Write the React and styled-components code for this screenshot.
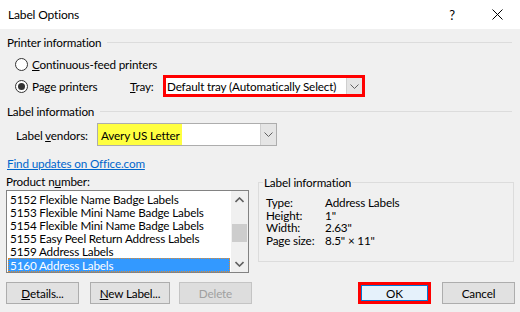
import React from "react";
import styled, { createGlobalStyle } from "styled-components";

const GlobalStyle = createGlobalStyle`
  html, body {
    margin: 0;
    padding: 0;
    background: #f0f0f0;
  }
  body {
    font-family: Lato, "Liberation Sans", Arial, sans-serif;
    font-size: 11.7px;
    letter-spacing: -0.15px;
    color: #000;
  }
`;

const products = [
  "5152 Flexible Name Badge Labels",
  "5153 Flexible Mini Name Badge Labels",
  "5154 Flexible Mini Name Badge Labels",
  "5155 Easy Peel Return Address Labels",
  "5159 Address Labels",
  "5160 Address Labels",
];

const details = [
  ["Type:", "Address Labels"],
  ["Height:", "1\""],
  ["Width:", "2.63\""],
  ["Page size:", "8.5\" \u00d7 11\""],
];

const Chevron = ({ up }) => (
  <svg width="9" height="6" viewBox="0 0 9 6">
    <path
      d={up ? "M0.5 5 L4.5 1 L8.5 5" : "M0.5 1 L4.5 5 L8.5 1"}
      fill="none"
      stroke="#606060"
      strokeWidth="1.6"
    />
  </svg>
);

const SmallChevron = () => (
  <svg width="9" height="5" viewBox="0 0 9 5">
    <path d="M0.5 0.5 L4.5 4.5 L8.5 0.5" fill="none" stroke="#606060" strokeWidth="1" />
  </svg>
);

const CloseIcon = () => (
  <svg width="11" height="11" viewBox="0 0 11 11">
    <path d="M0.5 0.5 L10.5 10.5 M10.5 0.5 L0.5 10.5" stroke="#000" strokeWidth="1" />
  </svg>
);

const App = () => {
  return (
    <>
      <GlobalStyle />
      <Dialog>
        <TitleBar>
          <Title>Label Options</Title>
          <TitleButtons>
            <Help>?</Help>
            <CloseBox>
              <CloseIcon />
            </CloseBox>
          </TitleButtons>
        </TitleBar>

        <Body>
          <SectionHeader top={5}>
            <span>Printer information</span>
            <Rule />
          </SectionHeader>

          <RadioRow top={3}>
            <Radio />
            <span>
              <u>C</u>ontinuous-feed printers
            </span>
          </RadioRow>
          <RadioRow>
            <Radio checked />
            <RadioText>
              Pa<u>g</u>e printers
            </RadioText>
            <TrayLabel>
              <u>T</u>ray:
            </TrayLabel>
            <RedMark>
              <Combo width={196}>
                <ComboText>Default tray (Automatically Select)</ComboText>
                <ComboArrow>
                  <SmallChevron />
                </ComboArrow>
              </Combo>
            </RedMark>
          </RadioRow>

          <SectionHeader top={6}>
            <span>Label information</span>
            <Rule />
          </SectionHeader>

          <VendorRow>
            <VendorLabel>
              Label <u>v</u>endors:
            </VendorLabel>
            <Combo width={180} bordered>
              <ComboText highlight>Avery US Letter</ComboText>
              <ComboArrow>
                <SmallChevron />
              </ComboArrow>
            </Combo>
          </VendorRow>

          <Link>Find updates on Office.com</Link>

          <Columns>
            <LeftColumn>
              <FieldLabel>
                Product n<u>u</u>mber:
              </FieldLabel>
              <ListBox>
                <ListItems>
                  {products.map((p, i) => (
                    <ListItem key={p} selected={i === products.length - 1}>
                      {p}
                    </ListItem>
                  ))}
                </ListItems>
                <ScrollBar>
                  <ScrollArrow>
                    <Chevron up />
                  </ScrollArrow>
                  <ScrollTrack>
                    <Thumb />
                  </ScrollTrack>
                  <ScrollArrow>
                    <Chevron />
                  </ScrollArrow>
                </ScrollBar>
              </ListBox>
            </LeftColumn>

            <GroupBox>
              <Legend>Label information</Legend>
              <InfoList>
                {details.map(([k, v]) => (
                  <InfoRow key={k}>
                    <InfoKey>{k}</InfoKey>
                    <span>{v}</span>
                  </InfoRow>
                ))}
              </InfoList>
            </GroupBox>
          </Columns>

          <ButtonBar>
            <ButtonGroup>
              <Button width={73}>
                <u>D</u>etails...
              </Button>
              <Button width={80} gap={11}>
                <u>N</u>ew Label...
              </Button>
              <Button width={73} gap={9} disabled>
                Delete
              </Button>
            </ButtonGroup>
            <ButtonGroup>
              <RedMark>
                <Button width={67} primary>
                  OK
                </Button>
              </RedMark>
              <Button width={73} gap={11}>
                Cancel
              </Button>
            </ButtonGroup>
          </ButtonBar>
        </Body>
      </Dialog>
    </>
  );
};

const Dialog = styled.div`
  width: 520px;
  height: 312px;
  display: flex;
  flex-direction: column;
  background: #f0f0f0;
  overflow: hidden;
`;

const TitleBar = styled.div`
  height: 29px;
  flex: none;
  background: #fff;
  display: flex;
  align-items: center;
  justify-content: space-between;
  padding: 0 0 0 8px;
`;

const Title = styled.div`
  font-size: 12px;
  margin-top: -1px;
`;

const TitleButtons = styled.div`
  display: flex;
  align-items: center;
  height: 100%;
`;

const Help = styled.div`
  width: 46px;
  text-align: center;
  font-size: 13px;
  margin-right: -1px;
`;

const CloseBox = styled.div`
  width: 46px;
  height: 100%;
  display: flex;
  align-items: center;
  justify-content: center;
`;

const Body = styled.div`
  flex: 1;
  padding: 0 7px;
  display: flex;
  flex-direction: column;
`;

const SectionHeader = styled.div`
  display: flex;
  align-items: center;
  height: 16px;
  margin-top: ${({ top }) => top ?? 6}px;
  white-space: nowrap;
`;

const Rule = styled.div`
  flex: 1;
  height: 1px;
  background: #dcdcdc;
  margin-left: 6px;
  margin-right: 1px;
`;

const RadioRow = styled.div`
  display: flex;
  align-items: center;
  height: 22px;
  margin-top: ${({ top }) => top ?? 0}px;
  padding-left: 8px;
  white-space: nowrap;
`;

const Radio = styled.span`
  width: 13px;
  height: 13px;
  flex: none;
  box-sizing: border-box;
  border: 1px solid #333;
  border-radius: 50%;
  background: #fff;
  margin-right: 4px;
  display: inline-flex;
  align-items: center;
  justify-content: center;

  &::after {
    content: "";
    width: 7px;
    height: 7px;
    border-radius: 50%;
    background: ${({ checked }) => (checked ? "#333" : "transparent")};
  }
`;

const RadioText = styled.span`
  width: 98px;
`;

const TrayLabel = styled.span`
  width: 33px;
`;

const RedMark = styled.div`
  border: 3px solid #f00;
  display: flex;
`;

const Combo = styled.div`
  width: ${({ width }) => width}px;
  height: ${({ bordered }) => (bordered ? 23 : 16)}px;
  box-sizing: border-box;
  display: flex;
  align-items: stretch;
  background: #fff;
  border: ${({ bordered }) => (bordered ? "1px solid #adadad" : "none")};
`;

const ComboText = styled.div`
  flex: 1;
  min-width: 0;
  display: flex;
  align-items: center;
  padding-left: ${({ highlight }) => (highlight ? 3 : 1)}px;
  white-space: nowrap;

  ${({ highlight }) =>
    highlight &&
    `
    flex: none;
    width: 81px;
    background: #ffff40;
    margin-right: auto;
  `}
`;

const ComboArrow = styled.div`
  width: 15px;
  flex: none;
  margin-left: auto;
  background: #e5e5e5;
  border-left: 1px solid #cfcfcf;
  display: flex;
  align-items: center;
  justify-content: center;
`;

const VendorRow = styled.div`
  display: flex;
  align-items: center;
  height: 23px;
  margin-top: 4px;
  padding-left: 9px;
`;

const VendorLabel = styled.span`
  width: 81px;
  white-space: nowrap;
`;

const Link = styled.a`
  color: #0066cc;
  text-decoration: underline;
  height: 16px;
  line-height: 16px;
  margin-top: 9px;
  align-self: flex-start;
`;

const Columns = styled.div`
  display: grid;
  grid-template-columns: 242px 1fr;
  column-gap: 9px;
  margin-top: 2px;
  margin-right: -1px;
`;

const LeftColumn = styled.div`
  display: flex;
  flex-direction: column;
  margin-left: -1px;
`;

const FieldLabel = styled.div`
  height: 17px;
  line-height: 16px;
`;

const ListBox = styled.div`
  height: 83px;
  box-sizing: border-box;
  border: 1px solid #828282;
  background: #fff;
  display: flex;
`;

const ListItems = styled.div`
  flex: 1;
  padding: 2px 1px 0 1px;
`;

const ListItem = styled.div`
  height: ${({ selected }) => (selected ? 14 : 13)}px;
  line-height: ${({ selected }) => (selected ? 14 : 13)}px;
  padding-left: 2px;
  white-space: nowrap;
  box-sizing: border-box;
  background: ${({ selected }) => (selected ? "#3399ff" : "transparent")};
  color: ${({ selected }) => (selected ? "#fff" : "#000")};
  outline: ${({ selected }) => (selected ? "1px dotted #e08a2c" : "none")};
  outline-offset: -1px;
`;

const ScrollBar = styled.div`
  width: 17px;
  background: #f0f0f0;
  display: flex;
  flex-direction: column;
`;

const ScrollArrow = styled.div`
  height: 17px;
  display: flex;
  align-items: center;
  justify-content: center;
`;

const ScrollTrack = styled.div`
  flex: 1;
  padding-top: 16px;
`;

const Thumb = styled.div`
  width: 15px;
  margin-left: 1px;
  height: 18px;
  background: #cdcdcd;
`;

const GroupBox = styled.fieldset`
  margin: 1px 0 0 0;
  padding: 0 0 0 4px;
  border: 1px solid #dcdcdc;
  height: 88px;
  box-sizing: border-box;
`;

const Legend = styled.legend`
  padding: 0 1px;
  line-height: 16px;
`;

const InfoList = styled.div`
  display: flex;
  flex-direction: column;
  padding-left: 3px;
  margin-top: 6px;
`;

const InfoRow = styled.div`
  display: flex;
  height: 12.7px;
  line-height: 12.7px;
  white-space: nowrap;
`;

const InfoKey = styled.span`
  width: 59px;
`;

const ButtonBar = styled.div`
  display: flex;
  justify-content: space-between;
  align-items: center;
  margin-top: 9px;
  margin-left: -1px;
  margin-right: -2px;
`;

const ButtonGroup = styled.div`
  display: flex;
  align-items: center;
`;

const Button = styled.button`
  font: inherit;
  letter-spacing: inherit;
  width: ${({ width }) => width}px;
  height: ${({ primary }) => (primary ? 16 : 22)}px;
  margin-left: ${({ gap }) => gap ?? 0}px;
  padding: 0;
  box-sizing: border-box;
  color: ${({ disabled }) => (disabled ? "#a0a0a0" : "#000")};
  background: ${({ primary, disabled }) =>
    primary ? "#e5f1fb" : disabled ? "#dddddd" : "#e1e1e1"};
  border: 1px solid
    ${({ primary, disabled }) =>
      primary ? "#0078d7" : disabled ? "#c4c4c4" : "#adadad"};
  border-radius: 0;
`;

export default App;
